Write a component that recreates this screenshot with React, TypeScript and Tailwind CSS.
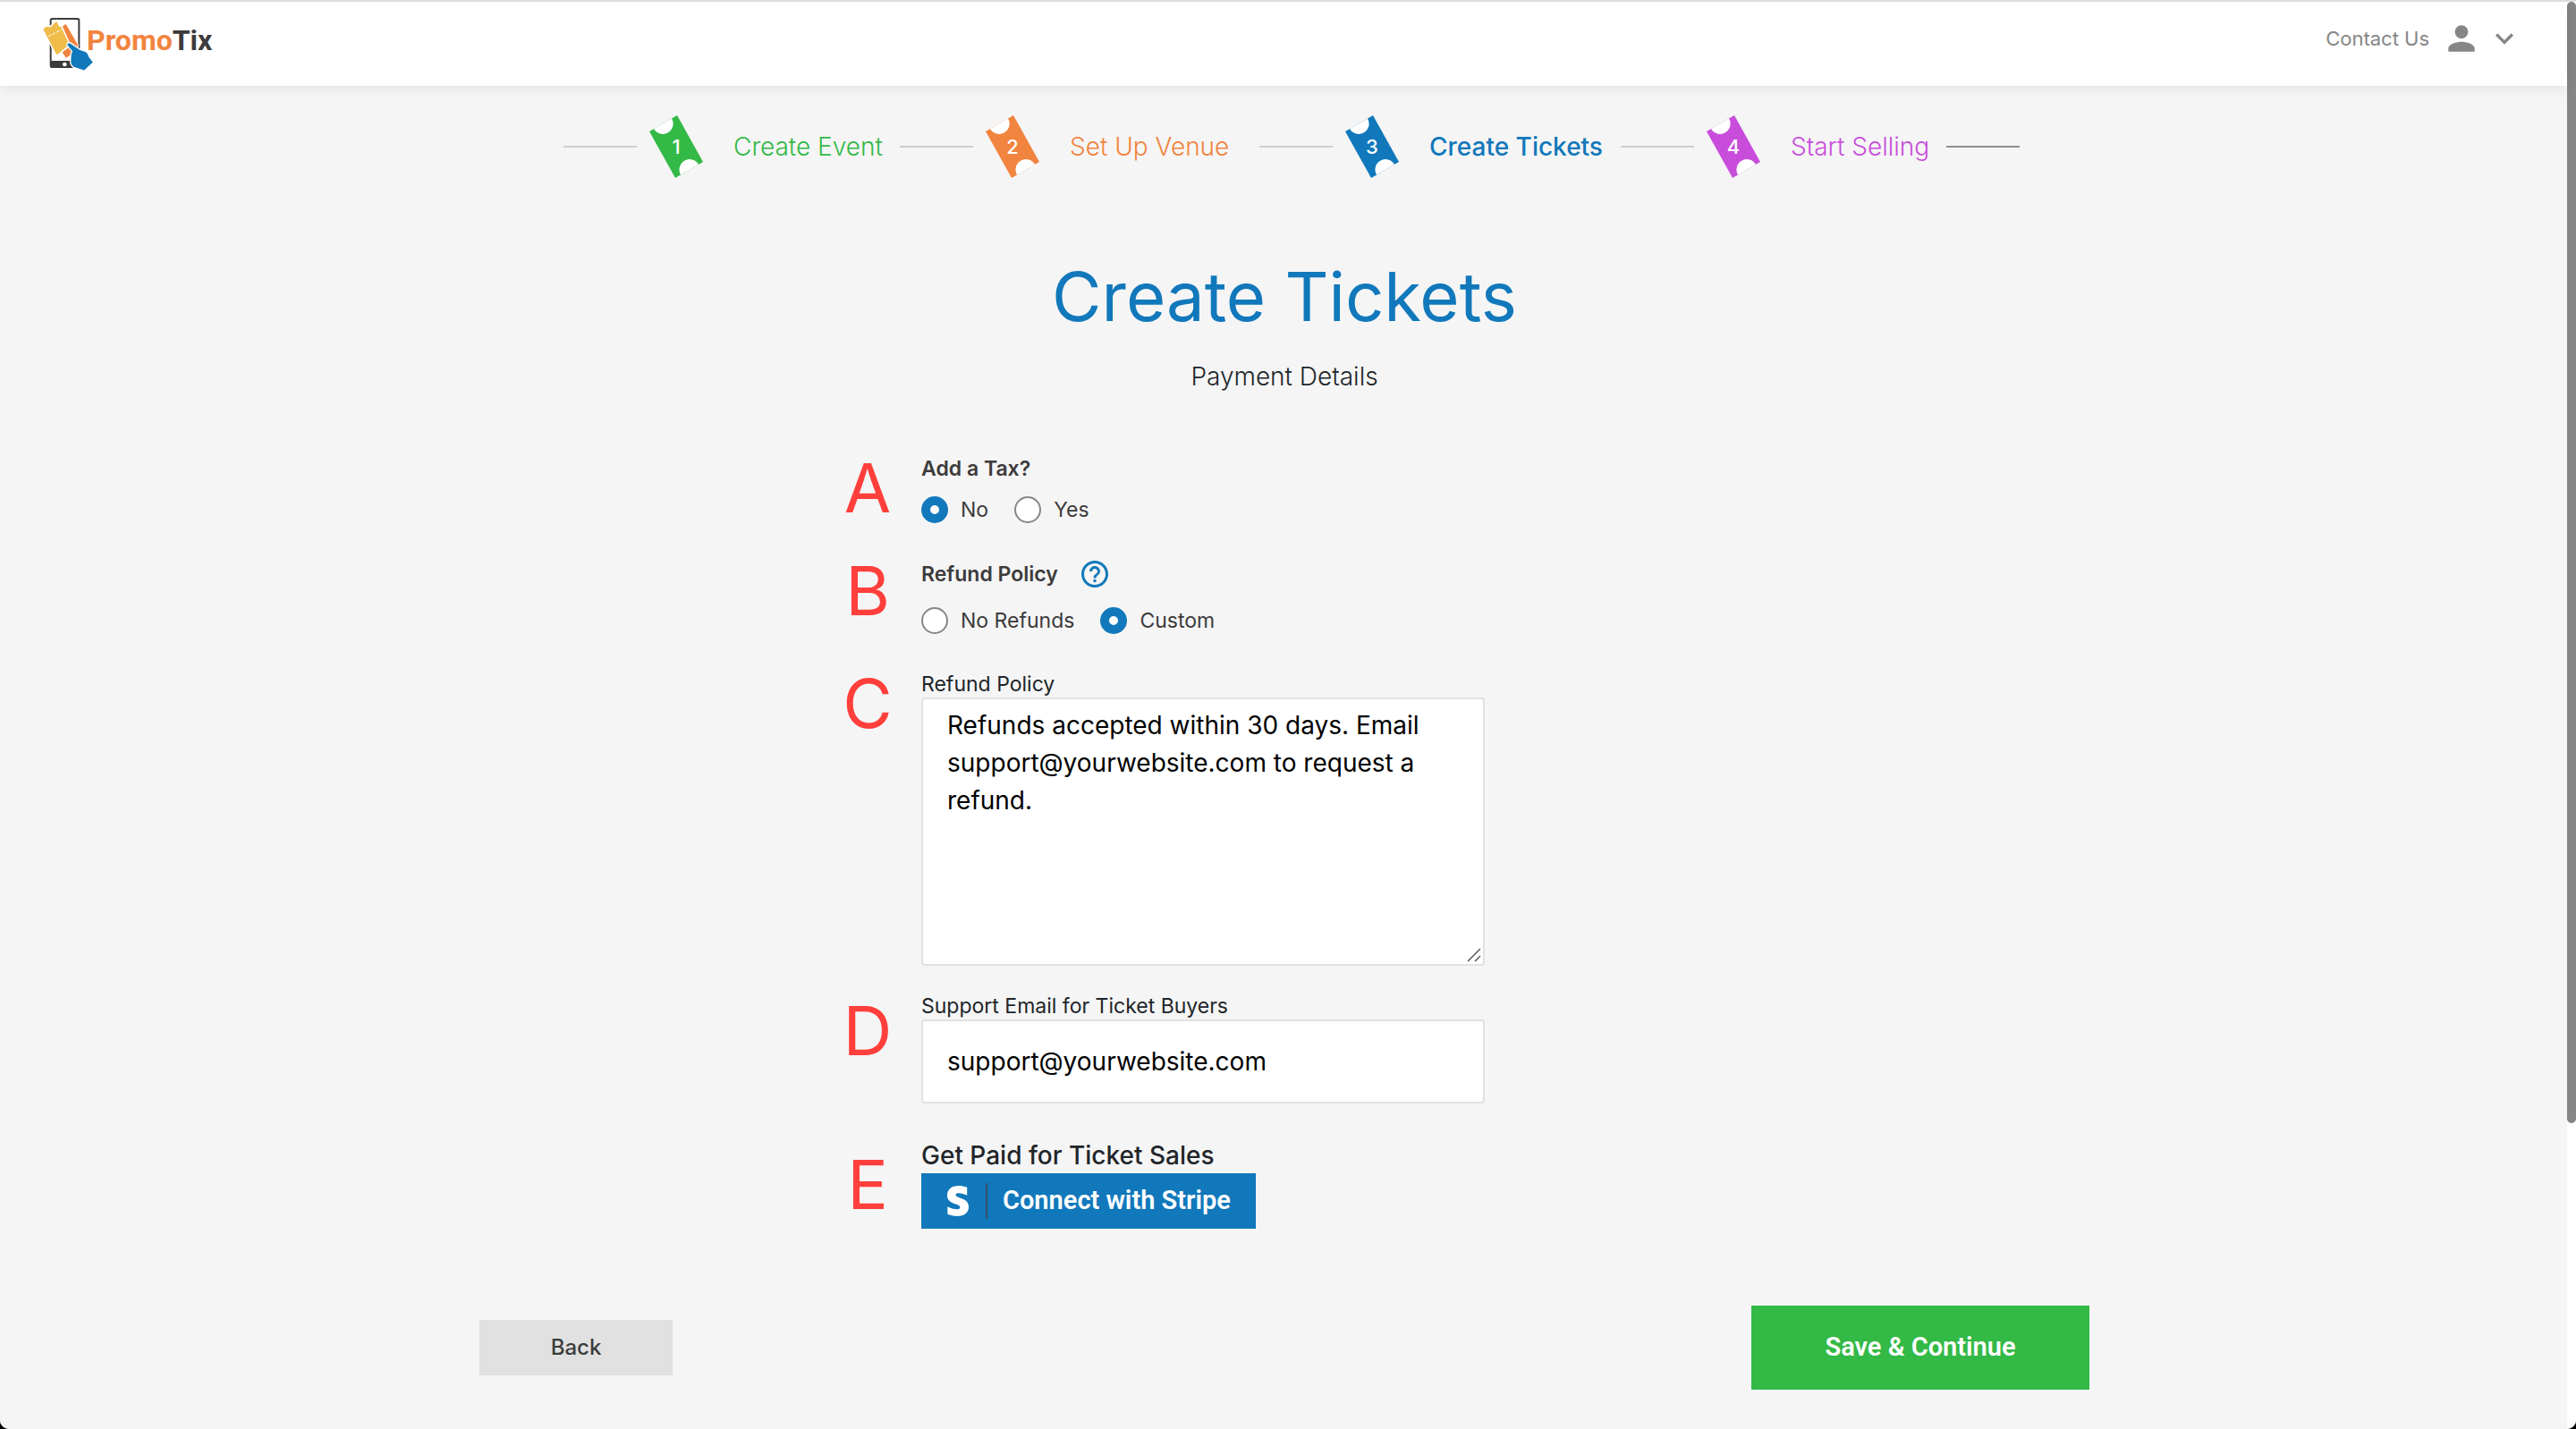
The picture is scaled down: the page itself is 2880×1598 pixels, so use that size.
import { useState } from "react";
import type { ReactNode } from "react";
import clsx from "clsx";
import { FaStripeS } from "react-icons/fa";
import { MdHelpOutline, MdKeyboardArrowDown, MdPerson } from "react-icons/md";

const steps = [
  { label: "Create Event", color: "text-[#33b946] font-light", width: "w-[168px]" },
  { label: "Set Up Venue", color: "text-[#f1843f] font-light", width: "w-[194px]" },
  { label: "Create Tickets", color: "text-[#1178bb] font-medium", width: "w-[196px]" },
  { label: "Start Selling", color: "text-[#c84ddb] font-light", width: "w-[156px]" },
];

const Logo = () => (
  <a href="#" className="flex items-start">
    <svg viewBox="141 54 174 186" className="h-[62px] w-[58px]" aria-hidden="true">
      <rect x="170" y="63" width="95" height="162" rx="5" fill="#fff" stroke="#3c3b3c" strokeWidth="6" />
      <path d="M168 204h100v18q0 6-6 6h-88q-6 0-6-6z" fill="#3c3b3c" />
      <circle cx="217" cy="216" r="7" fill="#fff" />
      <path d="M208 88l11-8q4 0 6 5l38 66-6 22-34 22q-6-1-7-8-5-3-8-12l28-22z" fill="#f1843f" stroke="#fff" strokeWidth="3" />
      <path d="M142 97l14-10q14 6 22-8l12-11 9 18 8 4 28 60-19 16-24 20-6-5z" fill="#f0bd4a" stroke="#fff" strokeWidth="4" />
      <path d="M163 122l44-23" stroke="#fff" strokeWidth="3" strokeDasharray="10 5" />
      <path
        d="M224 152q0-10 11-9l32 22 22 8q8 5 11 18l14 18-31 29-36-12q-12-8-11-22l1-20 4-12z"
        fill="#1178bb"
        stroke="#fff"
        strokeWidth="4"
        strokeLinejoin="round"
      />
    </svg>
    <span className="-ml-2 pt-[7px] font-[Roboto,sans-serif] text-[32px] leading-10 font-bold text-[#f1843f]">
      Promo<span className="text-[#3c3b3c]">Tix</span>
    </span>
  </a>
);

const Header = () => (
  <header className="relative flex h-[94px] items-start justify-between bg-white pr-[50px] pl-[47px] shadow-[0_0_16px_rgba(0,0,0,0.12)]">
    <div className="pt-4">
      <Logo />
    </div>
    <div className="flex items-center pt-[19px] text-[#868686]">
      <a href="#" className="text-[22px] leading-11">
        Contact Us
      </a>
      <button type="button" aria-label="Account menu" className="ml-3.5 flex items-center gap-1.5">
        <MdPerson className="size-11" />
        <MdKeyboardArrowDown className="size-10" />
      </button>
    </div>
  </header>
);

const Ticket = ({ number }: { number: number }) => (
  <span className="relative grid h-[70px] w-[60px] place-items-center">
    <svg viewBox="0 0 60 70" className="absolute inset-0 size-full" aria-hidden="true">
      <path d="M0 18L31 0l29 52-31 18z" fill="currentColor" />
      <path d="M5 15.1A11.5 11.5 0 0 0 25 3.5z" fill="#fff" />
      <path d="M55 54.9A11.5 11.5 0 0 0 35 66.5z" fill="#fff" />
    </svg>
    <span className="relative text-[22px] leading-none font-medium text-white">{number}</span>
  </span>
);

const Stepper = () => (
  <ol className="flex items-center justify-center pl-4">
    <li className="h-0.5 w-[82px] bg-[#cdcdcd]" aria-hidden="true" />
    {steps.map((step, i) => (
      <li key={step.label} className={clsx("flex items-center", step.color)}>
        <span className="ml-3.5">
          <Ticket number={i + 1} />
        </span>
        <span className={clsx("ml-[34px] text-[28px] leading-10 whitespace-nowrap", step.width)}>{step.label}</span>
        <span className={clsx("ml-[18px] h-0.5 w-[82px]", i === steps.length - 1 ? "bg-[#8f8f8f]" : "bg-[#cdcdcd]")} />
      </li>
    ))}
  </ol>
);

const Section = ({ letter, offset = "pt-2", children }: { letter: string; offset?: string; children: ReactNode }) => (
  <section className="grid grid-cols-[60px_630px] gap-x-[30px]">
    <span className={clsx("text-center text-[76px] leading-14 text-[#ff3f3b]", offset)}>{letter}</span>
    <div>{children}</div>
  </section>
);

type RadioProps = {
  name: string;
  label: string;
  checked: boolean;
  onChange: () => void;
};

const Radio = ({ name, label, checked, onChange }: RadioProps) => (
  <label className="flex items-center gap-3.5 text-[23px] leading-8 text-[#3c3b3c]">
    <input
      type="radio"
      name={name}
      checked={checked}
      onChange={onChange}
      className="size-[30px] appearance-none rounded-full border-2 border-[#868686] bg-white checked:border-10 checked:border-[#1178bb]"
    />
    {label}
  </label>
);

const PaymentForm = () => {
  const [tax, setTax] = useState(false);
  const [custom, setCustom] = useState(true);

  return (
    <div className="flex flex-col pl-[404px]">
      <Section letter="A">
        <fieldset>
          <legend className="text-[23px] leading-[30px] font-semibold text-[#3c3b3c]">Add a Tax?</legend>
          <div className="mt-[15px] flex gap-[29px]">
            <Radio name="tax" label="No" checked={!tax} onChange={() => setTax(false)} />
            <Radio name="tax" label="Yes" checked={tax} onChange={() => setTax(true)} />
          </div>
        </fieldset>
      </Section>

      <div className="mt-[38px]">
        <Section letter="B">
          <div className="flex h-9 items-center gap-[23px] text-[23px] font-semibold text-[#3c3b3c]">
            <span id="refund-heading">Refund Policy</span>
            <button type="button" aria-label="Refund policy help" className="text-[#1178bb]">
              <MdHelpOutline className="size-9" />
            </button>
          </div>
          <div role="radiogroup" aria-labelledby="refund-heading" className="mt-[18px] flex gap-[29px]">
            <Radio name="refund" label="No Refunds" checked={!custom} onChange={() => setCustom(false)} />
            <Radio name="refund" label="Custom" checked={custom} onChange={() => setCustom(true)} />
          </div>
        </Section>
      </div>

      <div className="mt-10">
        <Section letter="C">
          <label htmlFor="policy" className="block text-[23px] leading-[30px]">
            Refund Policy
          </label>
          <div className="relative">
            <textarea
              id="policy"
              className="block h-[300px] w-full resize-none rounded border-2 border-[#e1e1e1] bg-white px-[27px] py-2 text-[28px] leading-[42px] text-black"
              defaultValue="Refunds accepted within 30 days. Email support@yourwebsite.com to request a refund."
            />
            <svg viewBox="0 0 16 16" className="absolute right-1 bottom-1 size-4" aria-hidden="true">
              <path d="M1 15L15 1M9 15l6-6" stroke="#5a5a5a" strokeWidth="1.5" />
            </svg>
          </div>
        </Section>
      </div>

      <div className="mt-[30px]">
        <Section letter="D" offset="pt-3.5">
          <label htmlFor="email" className="block text-[23px] leading-[30px]">
            Support Email for Ticket Buyers
          </label>
          <input
            id="email"
            type="email"
            className="block h-[94px] w-full rounded border-2 border-[#e1e1e1] bg-white px-[27px] text-[28px] text-black"
            defaultValue="support@yourwebsite.com"
          />
        </Section>
      </div>

      <div className="mt-[38px]">
        <Section letter="E" offset="pt-6">
          <h2 className="text-[28px] leading-10 font-medium">Get Paid for Ticket Sales</h2>
          <button
            type="button"
            className="flex h-[62px] w-[374px] items-center bg-[#1178bb] pl-6 font-[Roboto,sans-serif] text-[29px] font-semibold whitespace-nowrap text-white"
          >
            <FaStripeS className="size-[34px]" />
            <span className="mr-[17px] ml-3.5 h-10 w-0.5 bg-[#35506b]" />
            Connect with Stripe
          </button>
        </Section>
      </div>
    </div>
  );
};

const App = () => {
  return (
    <div className="flex min-h-screen bg-black font-[Inter,sans-serif] text-[#212529]">
      <div className="flex flex-1 overflow-hidden rounded-b-[10px] border-t-2 border-[#dcdbe1] bg-white">
        <div className="flex-1 bg-[#f5f5f5]">
          <Header />
          <main className="mx-auto max-w-[1802px] pt-[33px] pl-0.5">
            <Stepper />
            <h1 className="mt-20 text-center text-[76px] leading-[104px] text-[#1178bb]">Create Tickets</h1>
            <p className="mt-[18px] mb-17 text-center text-[28px] leading-10 font-light">Payment Details</p>
            <PaymentForm />
            <div className="mt-[86px] flex items-center justify-between">
              <button type="button" className="h-[62px] w-[216px] bg-[#e1e1e1] text-[24px] font-medium text-[#3c3b3c]">
                Back
              </button>
              <button
                type="submit"
                className="h-[94px] w-[378px] bg-[#33b946] font-[Roboto,sans-serif] text-[29px] font-semibold text-white"
              >
                Save &amp; Continue
              </button>
            </div>
          </main>
        </div>
        <div className="w-2.5 bg-white" aria-hidden="true">
          <div className="h-[1254px] rounded-full bg-[#868686]" />
        </div>
      </div>
    </div>
  );
};

export default App;
